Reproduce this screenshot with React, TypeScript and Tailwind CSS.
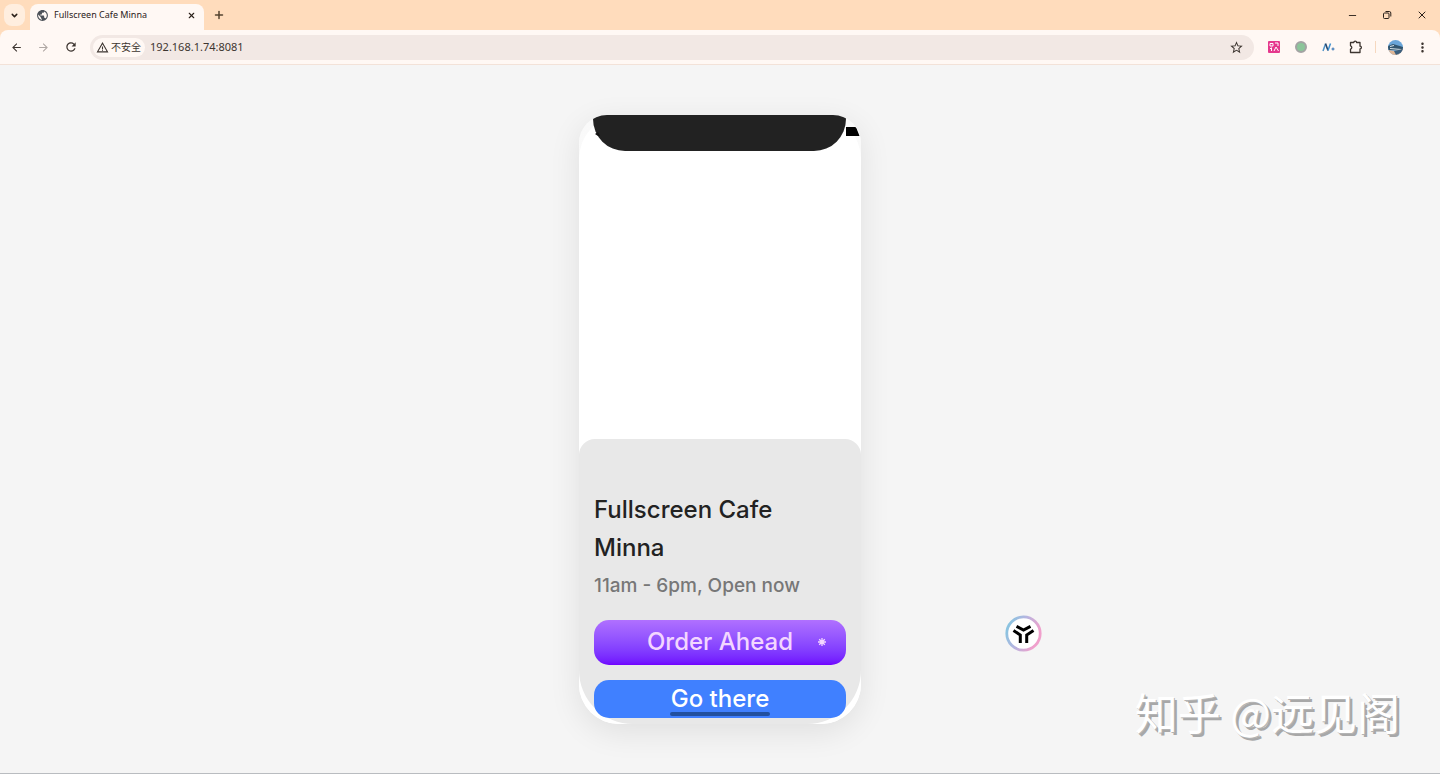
import React from "react";
import { ChevronDown, Minus, Plus, X } from "lucide-react";
import {
  MdArrowBack,
  MdArrowForward,
  MdMoreVert,
  MdPublic,
  MdRefresh,
  MdStarBorder,
  MdWarningAmber,
} from "react-icons/md";

function TabStrip() {
  return (
    <div className="flex h-[30px] items-end bg-[#ffdcbc] pl-1">
      <button
        aria-label="Search tabs"
        className="mb-1 flex h-[22px] w-[21px] items-center justify-center rounded-lg bg-[#ffeedf] text-[#2b211a]"
      >
        <ChevronDown size={9} strokeWidth={4} />
      </button>
      <div className="ml-[5px] flex h-[26px] w-[174px] items-center rounded-t-lg bg-[#fff8f4] pr-2 pl-1.5 pb-1">
        <MdPublic size={13} className="text-[#4c5158]" />
        <span className="ml-[5px] flex-1 text-[9px] text-[#2b211a]">
          Fullscreen Cafe Minna
        </span>
        <button aria-label="Close tab" className="text-[#2b211a]">
          <X size={9} strokeWidth={3} />
        </button>
      </div>
      <button
        aria-label="New tab"
        className="mb-1 ml-2 flex h-[22px] w-[14px] items-center justify-center text-[#54432f]"
      >
        <Plus size={12} strokeWidth={3} />
      </button>
      <div className="ml-auto flex h-full items-center gap-6 pr-3 text-[#2b211a]">
        <button aria-label="Minimize">
          <Minus size={11} strokeWidth={2} />
        </button>
        <button aria-label="Restore">
          <svg width="10" height="10" viewBox="0 0 10 10" fill="none" stroke="currentColor">
            <rect x="1.5" y="3" width="5.5" height="5.5" rx="1" />
            <path d="M3.5 1.5h3.8a1.5 1.5 0 0 1 1.5 1.5v3.5" />
          </svg>
        </button>
        <button aria-label="Close window">
          <X size={12} strokeWidth={2} />
        </button>
      </div>
    </div>
  );
}

function Toolbar() {
  return (
    <div className="flex h-[35px] items-center border-b border-[#f3e2d8] bg-[#fff8f4] pl-2.5 pr-2.5 text-[#3d3530]">
      <button aria-label="Back">
        <MdArrowBack size={13} />
      </button>
      <button aria-label="Forward" className="ml-3.5 text-[#b0a8a4]">
        <MdArrowForward size={13} />
      </button>
      <button aria-label="Reload" className="ml-3.5">
        <MdRefresh size={14} />
      </button>
      <div className="ml-3 flex h-[25px] flex-1 items-center rounded-full bg-[#f2e8e4] pl-[3px] pr-2.5">
        <button className="flex h-[19px] items-center gap-0.5 rounded-full bg-[#fff8f4] pl-[3px] pr-1 text-[10px]">
          <MdWarningAmber size={13} />
          不安全
        </button>
        <input
          aria-label="Address"
          defaultValue="192.168.1.74:8081"
          className="ml-[5px] flex-1 bg-transparent text-[11px] outline-none"
        />
        <button aria-label="Bookmark">
          <MdStarBorder size={15} />
        </button>
      </div>
      <div className="ml-3.5 flex items-center">
        <button aria-label="Translate">
          <svg width="12" height="12" viewBox="0 0 12 12" fill="none" stroke="#fff">
            <rect width="12" height="12" rx="1" fill="#e5398d" stroke="none" />
            <path d="M2 2.500h3v2.500h-3zM7 2h3v3M2 7l1.500 1.500M3.500 6.500v3.500M6 10l2-4 2.500 4" />
          </svg>
        </button>
        <button
          aria-label="Proxy"
          className="ml-[15px] h-3 w-3 rounded-full border-2 border-[#a3a3a3] bg-[#8cc59a]"
        />
        <button aria-label="Notes" className="ml-[15px]">
          <svg width="13" height="10" viewBox="0 0 13 10" fill="none">
            <path d="M1 9l2.500-7" stroke="#4f93c8" strokeWidth="1.500" />
            <path d="M3.500 1.500l2.500 7" stroke="#24466e" strokeWidth="1.600" />
            <path d="M6 8.500l2.500-7" stroke="#3d8fd0" strokeWidth="1.500" />
            <path d="M11 5.500v3M9.500 7h3" stroke="#2b6cb0" />
          </svg>
        </button>
        <button aria-label="Extensions" className="ml-3.5">
          <svg width="14" height="14" viewBox="0 0 14 14" fill="none" stroke="currentColor" strokeWidth="1.300" strokeLinejoin="round">
            <path d="M1.500 2.500h3.300a1.400 1.400 0 0 1 2.800 0h3.400v3.700a1.400 1.400 0 0 1 0 2.800v3.500h-9.500v-3.400a1.700 1.700 0 0 0 0-3.300z" />
          </svg>
        </button>
        <span className="ml-3 h-3 w-px bg-[#f6d8bf]" />
        <button aria-label="Profile" className="ml-3">
          <svg width="15" height="15" viewBox="0 0 15 15">
            <clipPath id="avatar">
              <circle cx="7.500" cy="7.500" r="7.500" />
            </clipPath>
            <g clipPath="url(#avatar)">
              <rect width="15" height="15" fill="#6aa5d8" />
              <path d="M0 6l5-2 10 3v3H0z" fill="#33566f" />
              <path d="M2 6.500l4-1M2 8.500l11 1" stroke="#d9e4ea" />
              <path d="M0 10l7 1 8-2v6H0z" fill="#e0b796" />
              <path d="M6 11l9-2v3l-7 3z" fill="#3b5f7d" />
            </g>
          </svg>
        </button>
        <button aria-label="Menu" className="ml-3">
          <MdMoreVert size={15} />
        </button>
      </div>
    </div>
  );
}

function StatusBar() {
  return (
    <div className="relative flex h-9">
      <svg className="absolute top-4 left-4" width="6" height="6" viewBox="0 0 6 6">
        <path d="M0 3l3-2 2 4-2 0z" fill="#111" />
      </svg>
      <div className="w-3.5" />
      <div className="flex-1 rounded-b-[32px] bg-[#222222]" />
      <svg className="mt-3 w-[15px]" height="9" viewBox="0 0 15 9">
        <path d="M0 0h8.500q1.500 0 2 1.200L13.500 9H0z" fill="#000" />
      </svg>
    </div>
  );
}

function Phone() {
  return (
    <div className="w-[282px] overflow-hidden rounded-t-[28px] rounded-b-[40px] bg-linear-to-b from-[#f9f9f9] to-white font-['Inter',sans-serif] font-medium shadow-[0_8px_32px_rgba(0,0,0,0.09)]">
      <div className="rounded-t-[44px] bg-white">
        <StatusBar />
        <div className="h-72" />
      </div>
      <div className="bg-white">
        <div className="rounded-t-2xl rounded-b-[54px] bg-[#e8e8e8] px-[15px] pt-[52px] pb-1.5">
          <h1 className="text-2xl leading-[38px] font-[450] text-[#222222]">
            Fullscreen Cafe Minna
          </h1>
          <p className="text-[19px] leading-[38px] font-[450] text-[#777777]">
            11am - 6pm, Open now
          </p>
          <button className="relative mt-[15px] block h-[45px] w-full rounded-[15px] bg-linear-to-b from-[#b070ff] to-[#7000ff] text-2xl font-[450] text-[#f3d6ff]">
            Order Ahead
            <svg
              className="absolute top-[18px] right-5"
              width="8"
              height="8"
              viewBox="0 0 8 8"
              stroke="#f3d6ff"
              strokeWidth="1.300"
            >
              <path d="M4 0v8M0 4h8M1.200 1.200l5.600 5.600M6.800 1.200l-5.600 5.600" />
            </svg>
          </button>
          <button className="relative mt-[15px] block h-[38px] w-full rounded-[15px] bg-[#4080ff] text-2xl text-white">
            Go there
            <span className="absolute bottom-0.5 left-1/2 h-1 w-[100px] -translate-x-1/2 rounded-sm bg-[#22509f]" />
          </button>
        </div>
      </div>
    </div>
  );
}

function AssistantButton() {
  return (
    <button aria-label="Assistant" className="absolute right-[398px] bottom-[121px]">
      <svg width="37" height="37" viewBox="0 0 37 37" fill="none">
        <defs>
          <linearGradient id="ring" x1="0" y1="0" x2="1" y2="0.400">
            <stop offset="0" stopColor="#7cc8e0" />
            <stop offset="0.500" stopColor="#b5b5e0" />
            <stop offset="1" stopColor="#f0a0cc" />
          </linearGradient>
        </defs>
        <circle cx="18.500" cy="18.500" r="16.700" fill="#fff" stroke="url(#ring)" strokeWidth="2.800" />
        <g stroke="#000" strokeWidth="3">
          <path d="M11.500 11.300l7 3.700 7-3.700" />
          <path d="M8.500 15.500l6.800 4.500v8" />
          <path d="M28.500 15.500l-6.800 4.500v8" />
        </g>
      </svg>
    </button>
  );
}

export default function App() {
  return (
    <div className="relative flex min-h-screen flex-col border-b border-[#b9bcc0] bg-[#f5f5f5] font-['Noto_Sans','Noto_Sans_CJK_SC',sans-serif]">
      <header className="bg-[#ffdcbc]">
        <TabStrip />
        <div className="overflow-hidden rounded-t-lg">
          <Toolbar />
        </div>
      </header>
      <main className="flex flex-1 items-center justify-center">
        <Phone />
      </main>
      <AssistantButton />
      <p className="absolute right-10 bottom-8 font-['Noto_Sans_CJK_SC',sans-serif] text-[43px] leading-[60px] text-white [text-shadow:1px_1px_0_#b4b4b4,3px_3px_0_#a8a8a8]">
        知乎 @远见阁
      </p>
    </div>
  );
}
